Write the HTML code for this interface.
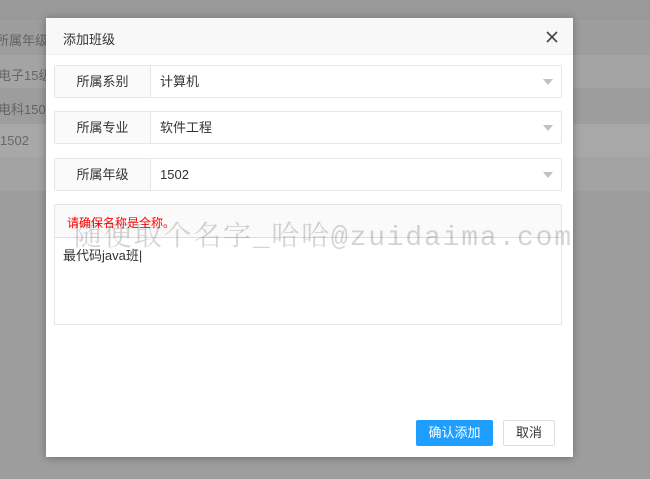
<!DOCTYPE html>
<html><head><meta charset="utf-8"><style>
*{box-sizing:border-box;margin:0;padding:0}
body{width:650px;height:479px;overflow:hidden;background:#9d9d9d;font-family:"Liberation Sans","Noto Sans CJK SC",sans-serif;font-size:13px;color:#333;position:relative}
.band{position:absolute;left:0;width:650px}
.bt{position:absolute;left:0;font-size:13px;color:#333;opacity:.55}
.dlg{position:absolute;left:46px;top:18px;width:527px;height:439px;background:#fff;box-shadow:0 1px 8px rgba(0,0,0,.3)}
.hd{height:37px;background:#f8f8f8;border-bottom:1px solid #eee;padding:11px 0 0 17px;font-size:13px;color:#333}
.x{position:absolute;right:15px;top:13px}
.row{position:absolute;left:8px;width:508px;height:33px;border:1px solid #e6e6e6;border-radius:2px;display:flex}
.lb{width:96px;background:#fafafa;border-right:1px solid #e6e6e6;text-align:center;line-height:31px}
.vl{padding-left:9px;line-height:31px;flex:1;position:relative}
.ar{position:absolute;right:8px;top:13px;width:0;height:0;border-left:5px solid transparent;border-right:5px solid transparent;border-top:6px solid #c2c2c2}
.err{position:absolute;left:8px;top:186px;width:508px;height:121px;border:1px solid #e6e6e6;background:#fafafa;border-radius:2px;overflow:hidden}
.et{position:absolute;left:12px;top:9px;color:#f00;font-size:12px}
.ta{position:absolute;left:0;top:32px;width:506px;height:87px;border-top:1px solid #ddd;background:#fff;padding:7px 8px}
.b1{position:absolute;left:370px;top:402px;width:77px;height:26px;background:#1e9fff;color:#fff;text-align:center;line-height:26px;border-radius:2px}
.b2{position:absolute;left:457px;top:402px;width:52px;height:26px;border:1px solid #ddd;background:#fff;text-align:center;line-height:24px;border-radius:2px}
.wm{position:absolute;left:74px;top:214px;font-family:"Liberation Mono","Noto Serif CJK SC",monospace;font-size:28px;color:rgba(0,0,0,.17);letter-spacing:1.8px;white-space:nowrap}
</style></head><body>
<div class="band" style="top:0;height:20px;background:#999"></div>
<div class="band" style="top:55px;height:33px;background:#a4a4a4"></div>
<div class="band" style="top:124px;height:33px;background:#a8a8a8"></div>
<div class="band" style="top:157px;height:34px;background:#a3a3a3"></div>
<div class="bt" style="top:30px;left:-4px">所属年级</div>
<div class="bt" style="top:65px;left:-2px">电子15级</div>
<div class="bt" style="top:99px;left:-2px">电科1501</div>
<div class="bt" style="top:133px">1502</div>
<div class="dlg">
<div class="hd">添加班级</div>
<svg class="x" width="12" height="12" viewBox="0 0 12 12"><path d="M1 1L11 11M11 1L1 11" stroke="#444" stroke-width="1.6"/></svg>
<div class="row" style="top:47px"><div class="lb">所属系别</div><div class="vl">计算机<span class="ar"></span></div></div>
<div class="row" style="top:93px"><div class="lb">所属专业</div><div class="vl">软件工程<span class="ar"></span></div></div>
<div class="row" style="top:140px"><div class="lb">所属年级</div><div class="vl">1502<span class="ar"></span></div></div>
<div class="err"><div class="et">请确保名称是全称。</div><div class="ta">最代码java班|</div></div>
<div class="b1">确认添加</div>
<div class="b2">取消</div>
</div>
<div class="wm">随便取个名字_哈哈@zuidaima.com</div>
</body></html>
